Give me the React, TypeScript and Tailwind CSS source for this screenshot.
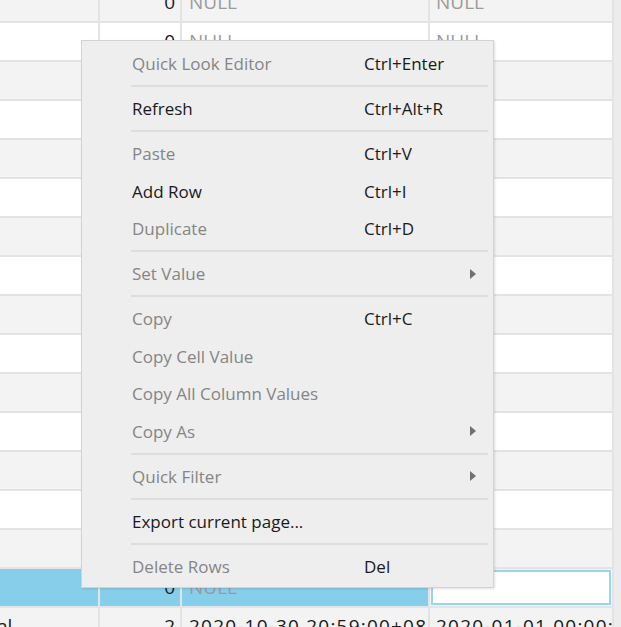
const font = { fontFamily: '"Open Sans", "Noto Sans", sans-serif' };

type Row = { c1?: string; c2?: string; c3?: string; c4?: string; c3null?: boolean; c4null?: boolean };

const rows: Row[] = [
  { c2: "0", c3: "NULL", c4: "NULL", c3null: true, c4null: true },
  { c2: "0", c3: "NULL", c4: "NULL", c3null: true, c4null: true },
  {}, {}, {}, {}, {}, {}, {}, {}, {}, {}, {}, {}, {},
  { c2: "0", c3: "NULL", c3null: true },
  { c1: "al", c2: "2", c3: "2020-10-30 20:59:00+08", c4: "2020-01-01 00:00:00" },
];

type Item =
  | { sep: true }
  | { sep?: false; label: string; key?: string; sub?: boolean; on?: boolean };

const items: Item[] = [
  { label: "Quick Look Editor", key: "Ctrl+Enter" },
  { sep: true },
  { label: "Refresh", key: "Ctrl+Alt+R", on: true },
  { sep: true },
  { label: "Paste", key: "Ctrl+V" },
  { label: "Add Row", key: "Ctrl+I", on: true },
  { label: "Duplicate", key: "Ctrl+D" },
  { sep: true },
  { label: "Set Value", sub: true },
  { sep: true },
  { label: "Copy", key: "Ctrl+C" },
  { label: "Copy Cell Value" },
  { label: "Copy All Column Values" },
  { label: "Copy As", sub: true },
  { sep: true },
  { label: "Quick Filter", sub: true },
  { sep: true },
  { label: "Export current page...", on: true },
  { sep: true },
  { label: "Delete Rows", key: "Del" },
];

// date values render wider in the original font
const isDate = (s?: string) => !!s && /^\d{4}-/.test(s);

function GridRow({ row, i }: { row: Row; i: number }) {
  const selected = i === 15;
  const bg = selected ? "bg-[#87ceeb]" : i % 2 === 0 ? "bg-[#f3f3f3]" : "bg-white";
  const cell = `h-[39px] shrink-0 border-r-2 border-b-2 ${selected ? "border-[#dfe6ea]" : "border-[#e3e3e3]"} flex items-center overflow-hidden whitespace-nowrap text-[19px] text-[#1a1a1a]`;
  return (
    <div className="flex">
      <div className={`${cell} ${bg} w-[100px]`}>
        {row.c1 && <span className="-ml-[3px]">{row.c1}</span>}
      </div>
      <div className={`${cell} ${bg} w-[82px] justify-end pr-[5px]`}>{row.c2}</div>
      <div className={`${cell} ${bg} w-[248px] pl-[7px] ${row.c3null ? "text-[#9b9b9b]" : ""} ${isDate(row.c3) ? "tracking-[1.2px]" : ""}`}>
        {row.c3}
      </div>
      {selected ? (
        <div className={`${cell} w-[184px] bg-[#f3f3f3] p-[1px]`}>
          <div className="h-full w-full border-2 border-[#9fd3ec] bg-white" />
        </div>
      ) : (
        <div className={`${cell} ${bg} w-[184px] pl-[6px] ${row.c4null ? "text-[#9b9b9b]" : ""} ${isDate(row.c4) ? "tracking-[1.2px]" : ""}`}>
          {row.c4}
        </div>
      )}
      <div className="h-[39px] w-[7px] shrink-0 bg-[#ececec]" />
    </div>
  );
}

function Arrow() {
  return (
    <svg width="6" height="10" viewBox="0 0 6 10" className="ml-auto mr-[17px]">
      <path d="M0 0 L6 5 L0 10 Z" fill="#707070" />
    </svg>
  );
}

function Menu() {
  return (
    <div
      className="absolute left-[81px] top-[40px] w-[413px] border border-[#d3d3d3] bg-[#eeeeee] pt-[4px] pb-[2px] shadow-[1px_1px_2px_rgba(0,0,0,0.12)]"
      style={font}
    >
      {items.map((it, idx) =>
        it.sep ? (
          <div key={idx} className="py-[2.75px] pl-[49px] pr-[5px]">
            <div className="h-[2px] bg-[#dddddd]" />
          </div>
        ) : (
          <div key={idx} className="flex h-[37.5px] items-center pl-[50px] text-[17px]">
            <span className={`w-[232px] ${it.on ? "text-[#1a1a1a]" : "text-[#858585]"}`}>{it.label}</span>
            {it.key && <span className="text-[#1a1a1a]">{it.key}</span>}
            {it.sub && <Arrow />}
          </div>
        )
      )}
    </div>
  );
}

export default function App() {
  return (
    <div className="relative h-[627px] w-[621px] overflow-hidden bg-[#ececec]" style={font}>
      <div className="-mt-[16px] flex flex-col">
        {rows.map((r, i) => (
          <GridRow key={i} row={r} i={i} />
        ))}
      </div>
      <Menu />
    </div>
  );
}
